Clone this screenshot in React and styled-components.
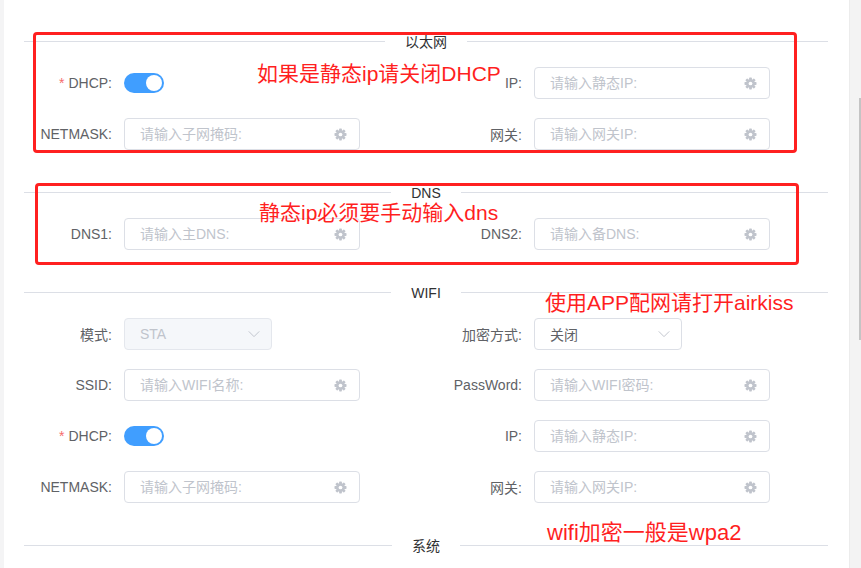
import React from 'react'
import styled, { createGlobalStyle } from 'styled-components'

const GlobalStyle = createGlobalStyle`
    html, body {
        margin: 0;
        padding: 0;
        background: #fff;
    }
    body {
        font-family: "Liberation Sans", Arial, "Noto Sans CJK SC", sans-serif;
    }
`

const Page = styled.div`
    position: relative;
    display: flex;
    flex-flow: row nowrap;
    width: 861px;
    height: 568px;
    overflow: hidden;
`

const SideStrip = styled.div`
    width: 4px;
    background: #f4f4f5;
`

const Main = styled.div`
    flex: 1;
    display: flex;
    flex-flow: column nowrap;
    padding: 18px 21px 0 20px;
    background: #fff;
`

const ScrollTrack = styled.div`
    width: 12px;
    background: #f3f3f3;
    border-left: 1px solid #ececec;
    box-sizing: border-box;
    display: flex;
    justify-content: flex-end;
    padding-top: 98px;
`

const ScrollThumb = styled.div`
    width: 2px;
    height: 242px;
    background: #c4c4c4;
`

const DividerRow = styled.div`
    display: flex;
    align-items: center;
    height: 1px;
    margin: 23px 0 25px;
    flex-shrink: 0;
`

const DividerLine = styled.div`
    flex: 1;
    height: 1px;
    background: #dcdfe6;
`

const DividerText = styled.span`
    padding: 0 20px;
    font-size: 14px;
    color: #303133;
    line-height: 1;
    font-family: "Liberation Sans", "Noto Sans CJK SC", sans-serif;
`

const FormRow = styled.div`
    display: grid;
    grid-template-columns: 410px 1fr;
    margin-bottom: 19px;
    flex-shrink: 0;
`

const FormItem = styled.div`
    display: flex;
    align-items: center;
    height: 32px;
`

const Label = styled.label`
    width: 100px;
    padding-right: 12px;
    box-sizing: border-box;
    text-align: right;
    font-size: 14px;
    color: #606266;
    font-family: "Liberation Sans", "Noto Sans CJK SC", sans-serif;
    white-space: nowrap;
`

const Required = styled.span`
    color: #f56c6c;
    margin-right: 4px;
`

const InputWrap = styled.div`
    display: flex;
    align-items: center;
    width: 236px;
    height: 32px;
    box-sizing: border-box;
    border: 1px solid #dcdfe6;
    border-radius: 4px;
    padding: 0 12px 0 15px;
    background: #fff;
`

const TextInput = styled.input`
    flex: 1;
    min-width: 0;
    border: none;
    outline: none;
    padding: 0;
    background: transparent;
    font-size: 14px;
    color: #606266;
    font-family: "Liberation Sans", "Noto Sans CJK SC", sans-serif;

    &::placeholder {
        color: #c0c4cc;
    }
`

const SelectBox = styled.div`
    display: flex;
    align-items: center;
    justify-content: space-between;
    width: 148px;
    height: 32px;
    box-sizing: border-box;
    border: 1px solid ${p => (p.$disabled ? '#e4e7ed' : '#dcdfe6')};
    border-radius: 4px;
    padding: 0 10px 0 15px;
    background: ${p => (p.$disabled ? '#f5f7fa' : '#fff')};
    font-size: 14px;
    color: ${p => (p.$disabled ? '#c0c4cc' : '#606266')};
    font-family: "Liberation Sans", "Noto Sans CJK SC", sans-serif;
`

const SwitchTrack = styled.div`
    position: relative;
    width: 40px;
    height: 20px;
    border-radius: 10px;
    background: #409eff;
`

const SwitchKnob = styled.div`
    position: absolute;
    top: 2px;
    right: 2px;
    width: 16px;
    height: 16px;
    border-radius: 50%;
    background: #fff;
`

const NoteBox = styled.div`
    position: absolute;
    left: ${p => p.$left}px;
    top: ${p => p.$top}px;
    width: ${p => p.$width}px;
    height: ${p => p.$height}px;
    box-sizing: border-box;
    border: 3px solid #ff2020;
    border-radius: 4px;
    pointer-events: none;
`

const NoteText = styled.div`
    position: absolute;
    left: ${p => p.$left}px;
    top: ${p => p.$top}px;
    font-size: ${p => p.$size || 21}px;
    line-height: 1;
    color: #ff1f1f;
    white-space: nowrap;
    font-family: "Liberation Sans", Arial, "Noto Sans CJK SC", sans-serif;
`

const Gear = () => (
    <svg width="13" height="13" viewBox="0 0 16 16">
        <g fill="#c0c4cc">
            {[0, 45, 90, 135].map(a => (
                <rect key={a} x="6.3" y="0.6" width="3.4" height="14.8" rx="0.8" transform={`rotate(${a} 8 8)`} />
            ))}
            <circle cx="8" cy="8" r="5.3" />
        </g>
        <circle cx="8" cy="8" r="2.3" fill="#fff" />
    </svg>
)

const Chevron = () => (
    <svg width="14" height="14" viewBox="0 0 16 16">
        <path d="M2 5 L8 11 L14 5" fill="none" stroke="#c0c4cc" strokeWidth="1.1" />
    </svg>
)

const Divider = ({ title }) => (
    <DividerRow>
        <DividerLine />
        <DividerText>{title}</DividerText>
        <DividerLine />
    </DividerRow>
)

const Field = ({ label, placeholder, required }) => (
    <FormItem>
        <Label>{required && <Required>*</Required>}{label}</Label>
        <InputWrap>
            <TextInput placeholder={placeholder} />
            <Gear />
        </InputWrap>
    </FormItem>
)

const SwitchField = ({ label }) => (
    <FormItem>
        <Label><Required>*</Required>{label}</Label>
        <SwitchTrack>
            <SwitchKnob />
        </SwitchTrack>
    </FormItem>
)

const SelectField = ({ label, value, disabled }) => (
    <FormItem>
        <Label>{label}</Label>
        <SelectBox $disabled={disabled}>
            <span>{value}</span>
            <Chevron />
        </SelectBox>
    </FormItem>
)

const App = () => {
    return (
        <Page>
            <GlobalStyle />
            <SideStrip />
            <Main>
                <Divider title="以太网" />
                <FormRow>
                    <SwitchField label="DHCP:" />
                    <Field label="IP:" placeholder="请输入静态IP:" />
                </FormRow>
                <FormRow>
                    <Field label="NETMASK:" placeholder="请输入子网掩码:" />
                    <Field label="网关:" placeholder="请输入网关IP:" />
                </FormRow>

                <Divider title="DNS" />
                <FormRow>
                    <Field label="DNS1:" placeholder="请输入主DNS:" />
                    <Field label="DNS2:" placeholder="请输入备DNS:" />
                </FormRow>

                <Divider title="WIFI" />
                <FormRow>
                    <SelectField label="模式:" value="STA" disabled />
                    <SelectField label="加密方式:" value="关闭" />
                </FormRow>
                <FormRow>
                    <Field label="SSID:" placeholder="请输入WIFI名称:" />
                    <Field label="PassWord:" placeholder="请输入WIFI密码:" />
                </FormRow>
                <FormRow>
                    <SwitchField label="DHCP:" />
                    <Field label="IP:" placeholder="请输入静态IP:" />
                </FormRow>
                <FormRow>
                    <Field label="NETMASK:" placeholder="请输入子网掩码:" />
                    <Field label="网关:" placeholder="请输入网关IP:" />
                </FormRow>

                <Divider title="系统" />
            </Main>
            <ScrollTrack>
                <ScrollThumb />
            </ScrollTrack>

            <NoteBox $left={33} $top={32} $width={764} $height={121} />
            <NoteBox $left={35} $top={183} $width={764} $height={82} />
            <NoteText $left={257} $top={63}>如果是静态ip请关闭DHCP</NoteText>
            <NoteText $left={259} $top={202}>静态ip必须要手动输入dns</NoteText>
            <NoteText $left={545} $top={292}>使用APP配网请打开airkiss</NoteText>
            <NoteText $left={547} $top={522} $size={22}>wifi加密一般是wpa2</NoteText>
        </Page>
    )
}

export default App
